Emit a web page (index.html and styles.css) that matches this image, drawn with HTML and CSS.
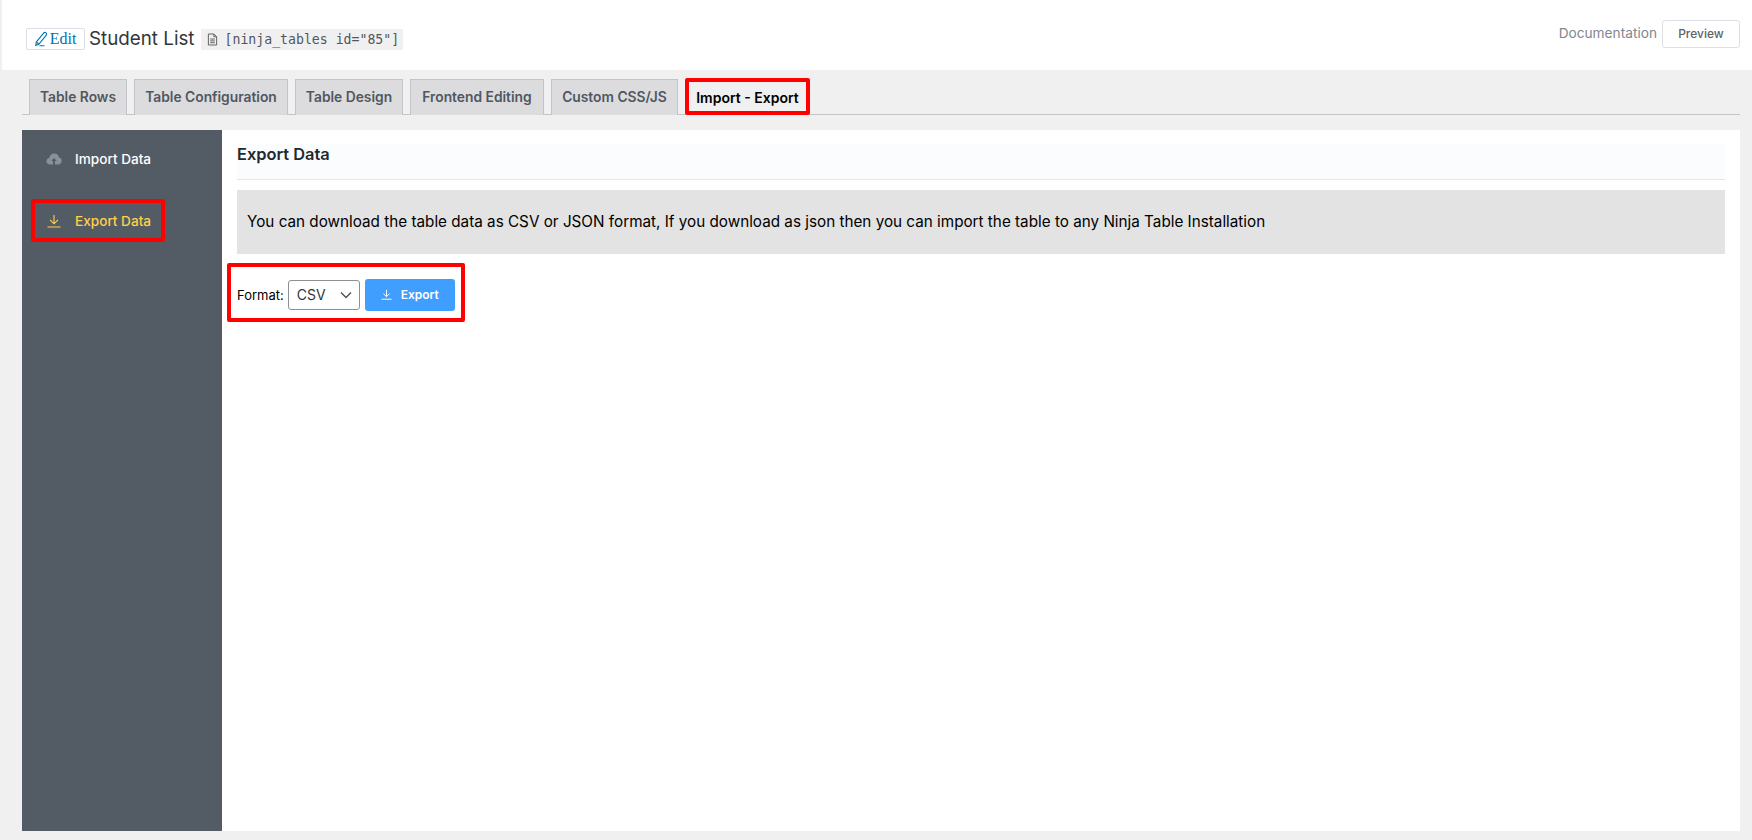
FILE: index.html
```html
<!DOCTYPE html>
<html lang="en">
<head>
<meta charset="utf-8">
<title>Student List</title>
<link rel="stylesheet" href="styles.css">
</head>
<body>
<header class="top">
  <div class="title-group">
    <a class="edit-btn"><svg class="edit-icon" viewBox="0 0 16 16"><path d="M2.200 11.200 9.600 2.200c.7-.8 1.700-.9 2.400-.3s.8 1.600.1 2.400L4.800 13.300l-3 1.200z" fill="none" stroke="currentColor" stroke-width="1.100"/><path d="M3 11.500l1.800 1.500M5.500 14.700h5" fill="none" stroke="currentColor" stroke-width="1.100"/></svg>Edit</a>
    <h1 class="title">Student List</h1>
    <code class="shortcode"><svg class="doc-icon" viewBox="0 0 12 14"><path d="M1.500 1h6l3 3v9h-9z M7.500 1v3h3 M3.500 6.500h5 M3.500 8.500h5 M3.500 10.500h5" fill="none" stroke="currentColor" stroke-width="1"/></svg>[ninja_tables id="85"]</code>
  </div>
  <div class="top-actions">
    <a class="doc-link">Documentation</a>
    <a class="preview-btn">Preview</a>
  </div>
</header>

<nav class="tabs">
  <a class="tab tab-rows">Table Rows</a>
  <a class="tab tab-config">Table Configuration</a>
  <a class="tab tab-design">Table Design</a>
  <a class="tab tab-frontend">Frontend Editing</a>
  <a class="tab tab-css">Custom CSS/JS</a>
  <a class="tab tab-active">Import - Export</a>
</nav>

<main class="panel">
  <aside class="side">
    <a class="side-item">
      <svg class="side-icon" viewBox="0 0 16 12"><path d="M4 11.500C1.900 11.500.4 10.100.4 8.200c0-1.700 1.200-3 2.800-3.200C3.700 2.400 5.700.6 8.200.6c2.400 0 4.300 1.600 4.800 3.900 1.600.2 2.700 1.600 2.700 3.300 0 2-1.500 3.700-3.500 3.700H9V8h1.800L8 5 5.200 8H7v3.500z" fill="#8b8f97"/></svg>
      <span>Import Data</span>
    </a>
    <a class="side-item side-active">
      <svg class="side-icon" viewBox="0 0 14 14"><path d="M7 1v8.500M3 5.800l4 4 4-4M.5 13h13" fill="none" stroke="currentColor" stroke-width="1.100"/></svg>
      <span>Export Data</span>
    </a>
  </aside>
  <section class="content">
    <h2 class="content-title">Export Data</h2>
    <p class="notice">You can download the table data as CSV or JSON format, If you download as json then you can import the table to any Ninja Table Installation</p>
    <div class="export-form">
      <label class="format-label">Format:</label>
      <div class="select">CSV<svg class="chevron" viewBox="0 0 12 8"><path d="M1 1.500l5 5 5-5" fill="none" stroke="#555" stroke-width="1.500"/></svg></div>
      <a class="export-btn"><svg class="export-icon" viewBox="0 0 14 14"><path d="M7 1v8.500M3 5.800l4 4 4-4M.5 13h13" fill="none" stroke="currentColor" stroke-width="1.200"/></svg>Export</a>
    </div>
  </section>
</main>
</body>
</html>
```

FILE: styles.css
```css
* { box-sizing: border-box; }

html, body { margin: 0; height: 100%; }

body {
  width: 1752px;
  height: 840px;
  overflow: hidden;
  background: #f0f0f0;
  font-family: Inter, "Liberation Sans", sans-serif;
  color: #23282d;
}

.top {
  height: 70px;
  margin-left: 2px;
  background: #fff;
  display: flex;
  justify-content: space-between;
  padding: 20px 12px 0 24px;
}

.title-group { display: flex; align-items: flex-start; padding-top: 8px; }

.edit-btn {
  width: 59px;
  height: 22px;
  border: 1px solid #dcdfe6;
  border-radius: 2px;
  display: flex;
  align-items: center;
  justify-content: center;
  font: 16px/20px "Liberation Serif", serif;
  color: #0073aa;
  background: #fff;
}

.edit-icon { width: 16px; height: 16px; margin-left: -1px; }

.title {
  margin: -1px 0 0 4px;
  font-size: 18.800px;
  line-height: 24px;
  font-weight: 400;
  color: #32373c;
}

.shortcode {
  margin-left: 6px;
  margin-top: 1px;
  width: 202px;
  height: 21px;
  background: #f0f0f1;
  display: flex;
  align-items: center;
  padding-left: 6px;
  font: 13.200px/21px "DejaVu Sans Mono", monospace;
  color: #50575e;
  white-space: nowrap;
}

.doc-icon { width: 11px; height: 13px; margin-right: 7px; color: #555; }

.top-actions { display: flex; align-items: flex-start; }

.doc-link { font-size: 13.700px; line-height: 26px; color: #82878c; margin-right: 5px; }

.preview-btn {
  width: 78px;
  height: 28px;
  border: 1px solid #dcdfe6;
  border-radius: 3px;
  text-align: center;
  font-size: 12px;
  font-weight: 500;
  line-height: 26px;
  color: #606266;
  background: #fff;
}

.tabs {
  display: flex;
  gap: 7px;
  height: 45px;
  margin: 0 12px 0 22px;
  padding: 9px 0 0 7px;
  border-bottom: 1px solid #c3c4c7;
}

.tab {
  height: 36px;
  border: 1px solid #c3c4c7;
  border-bottom: 0;
  background: #dcdcde;
  color: #50575e;
  font-size: 13.800px;
  font-weight: 600;
  line-height: 35px;
  text-align: center;
  white-space: nowrap;
}

.tab-rows { width: 98px; }
.tab-config { width: 154px; }
.tab-design { width: 108px; }
.tab-frontend { width: 134px; }
.tab-css { width: 127px; }

.tab-active {
  width: 125px;
  height: 37px;
  margin-top: -1px;
  border: 4px solid #f00;
  border-radius: 2px;
  background: #f0f0f0;
  color: #000;
  line-height: 31px;
  font-size: 14px;
}

.panel {
  display: flex;
  height: 701px;
  margin: 15px 12px 0 22px;
  background: #fff;
}

.side {
  width: 200px;
  flex: none;
  background: #535c64;
  padding-top: 7px;
}

.side-item {
  display: flex;
  align-items: center;
  width: 134px;
  height: 43px;
  margin: 0 0 19px 9px;
  padding-left: 11px;
  color: #fff;
  font-size: 13.600px;
  font-weight: 450;
  border: 4px solid transparent;
}

.side-icon { width: 16px; height: 14px; margin-right: 13px; flex: none; }

.side-active { color: #ffd04b; border-color: #f00; border-radius: 2px; }

.content { flex: 1; padding: 14px 15px 0; min-width: 0; }

.content-title {
  margin: 0;
  height: 36px;
  background: #fbfcfe;
  border-bottom: 1px solid #e6e6e6;
  font-size: 16.400px;
  font-weight: 600;
  line-height: 21px;
  color: #23282d;
}

.notice {
  margin: 10px 0 0;
  height: 64px;
  background: #e3e3e3;
  padding-left: 10px;
  font-size: 15.250px;
  line-height: 64px;
  color: #000;
}

.export-form {
  display: flex;
  align-items: center;
  width: 238px;
  height: 59px;
  margin: 9px 0 0 -10px;
  padding: 4px 0 0 6px;
  border: 4px solid #f00;
  border-radius: 2px;
  color: #000;
}

.format-label { font-size: 13px; font-weight: 400; margin-right: 4px; }

.select {
  width: 72px;
  height: 30px;
  border: 1px solid #8c8f94;
  border-radius: 3px;
  display: flex;
  align-items: center;
  justify-content: space-between;
  padding: 0 7px 0 8px;
  font-size: 14px;
  color: #32373c;
  margin-right: 5px;
}

.chevron { width: 12px; height: 8px; }

.export-btn {
  width: 90px;
  height: 32px;
  background: #409eff;
  border-radius: 3px;
  color: #fff;
  font-size: 12px;
  font-weight: 600;
  display: flex;
  align-items: center;
  justify-content: center;
}

.export-icon { width: 11px; height: 11px; margin-right: 9px; }
```
